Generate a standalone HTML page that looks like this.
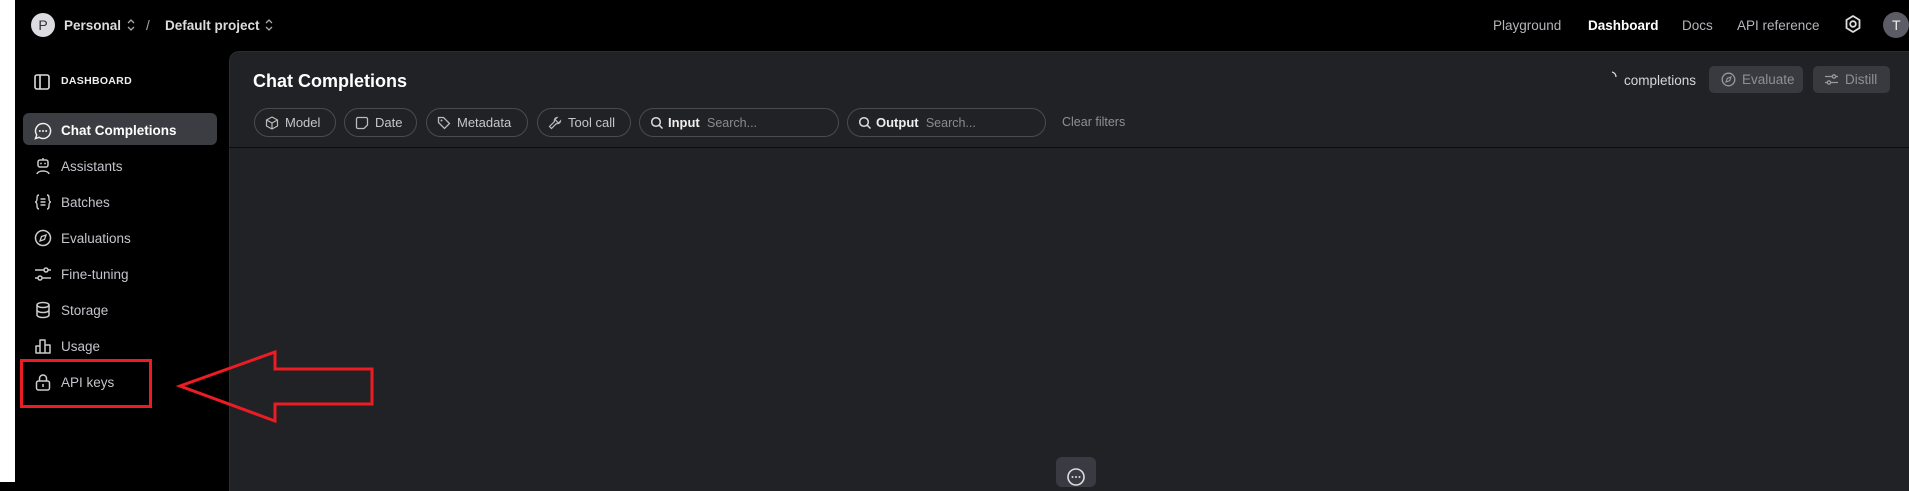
<!DOCTYPE html>
<html><head><meta charset="utf-8"><style>
*{box-sizing:border-box;margin:0;padding:0}
body{width:1909px;height:482px;overflow:hidden;background:#000;font-family:"Liberation Sans",sans-serif;position:relative;color:#ececf1}
.abs{position:absolute}
.white{left:0;top:0;width:15px;height:482px;background:#fff}
.t{position:absolute;white-space:nowrap;line-height:1}
.panel{left:229px;top:51px;width:1700px;height:440px;background:#212225;border-radius:10px 0 0 0;border-top:1px solid #2c2d31;border-left:1px solid #2c2d31}
.div{left:229px;top:147px;width:1680px;height:1px;background:#0c0c0d}
.nav{font-size:13.5px;color:#b4b4bb;top:19px}
.item{font-size:13.5px;color:#c5c5cc;left:61px}
.ico{position:absolute;left:34px}
.pill{position:absolute;top:108px;height:29px;border:1px solid #4a4b51;border-radius:15px;color:#c5c6cc;font-size:13px;line-height:27px;padding-left:30px}
.pill svg{position:absolute;left:10px;top:7px}
.btn{position:absolute;top:66px;height:27px;background:#393a40;border-radius:5px;color:#8f9097;font-size:13.5px;line-height:27px}
</style></head><body>
<div class="abs white"></div>
<div class="abs" style="left:31px;top:13px;width:24px;height:24px;border-radius:50%;background:#dcdce0;color:#333;font-size:14px;text-align:center;line-height:24px">P</div>
<div class="t" style="left:64px;top:19px;font-size:13.5px;font-weight:bold;color:#ddd">Personal</div>
<svg class="abs" style="left:126px;top:17px" width="10" height="16" viewBox="0 0 10 16"><path d="M2 6l3-3 3 3M2 10l3 3 3-3" stroke="#aaa" fill="none" stroke-width="1.3"/></svg>
<div class="t" style="left:146px;top:19px;font-size:13.5px;color:#aaa">/</div>
<div class="t" style="left:165px;top:19px;font-size:13.5px;font-weight:bold;color:#ddd">Default project</div>
<svg class="abs" style="left:264px;top:17px" width="10" height="16" viewBox="0 0 10 16"><path d="M2 6l3-3 3 3M2 10l3 3 3-3" stroke="#aaa" fill="none" stroke-width="1.3"/></svg>

<div class="t nav" style="left:1493px">Playground</div>
<div class="t nav" style="left:1588px;color:#fff;font-weight:bold">Dashboard</div>
<div class="t nav" style="left:1682px">Docs</div>
<div class="t nav" style="left:1737px">API reference</div>
<svg class="abs" style="left:1843px;top:14px" width="20" height="20" viewBox="0 0 20 20"><path d="M10 2l6.5 4v8L10 18l-6.5-4V6z" stroke="#ddd" stroke-width="1.8" fill="none" stroke-linejoin="round"/><circle cx="10" cy="10" r="2.8" stroke="#ddd" stroke-width="1.8" fill="none"/></svg>
<div class="abs" style="left:1883px;top:12px;width:26px;height:26px;border-radius:50%;background:#5b5c66;color:#eee;font-size:14px;line-height:26px;padding-left:9px">T</div>

<svg class="ico" style="top:74px" width="16" height="16" viewBox="0 0 16 16"><rect x="1" y="1" width="14" height="14" rx="2" stroke="#ddd" stroke-width="1.6" fill="none"/><path d="M6 1v14" stroke="#ddd" stroke-width="1.6"/></svg>
<div class="t" style="left:61px;top:76px;font-size:10.5px;font-weight:bold;color:#eee;letter-spacing:.3px">DASHBOARD</div>

<div class="abs" style="left:23px;top:113px;width:194px;height:32px;background:#3c3d42;border-radius:6px"></div>
<svg class="ico" style="top:122px" width="18" height="18" viewBox="0 0 18 18"><path d="M9 1.5a7.5 7.5 0 1 1-4 13.8L1.5 16.5l1.2-3.5A7.5 7.5 0 0 1 9 1.5z" stroke="#eee" stroke-width="1.5" fill="none"/><circle cx="5.8" cy="9" r="1" fill="#eee"/><circle cx="9" cy="9" r="1" fill="#eee"/><circle cx="12.2" cy="9" r="1" fill="#eee"/></svg>
<div class="t item" style="top:124px;color:#fff;font-weight:bold">Chat Completions</div>

<svg class="ico" style="top:157px" width="18" height="18" viewBox="0 0 18 18"><rect x="4" y="3" width="10" height="7" rx="2" stroke="#ccc" stroke-width="1.5" fill="none"/><path d="M9 1v2M3 17c1-4 11-4 12 0" stroke="#ccc" stroke-width="1.5" fill="none"/><circle cx="7" cy="6.5" r=".9" fill="#ccc"/><circle cx="11" cy="6.5" r=".9" fill="#ccc"/></svg>
<div class="t item" style="top:160px">Assistants</div>
<svg class="ico" style="top:193px" width="18" height="18" viewBox="0 0 18 18"><path d="M5 2C3 2 3 4 3 6s-1 3-2 3c1 0 2 1 2 3s0 4 2 4M13 2c2 0 2 2 2 4s1 3 2 3c-1 0-2 1-2 3s0 4-2 4M6.5 6h5M6.5 9h5M6.5 12h5" stroke="#ccc" stroke-width="1.4" fill="none"/></svg>
<div class="t item" style="top:196px">Batches</div>
<svg class="ico" style="top:229px" width="18" height="18" viewBox="0 0 18 18"><circle cx="9" cy="9" r="7.5" stroke="#ccc" stroke-width="1.5" fill="none"/><path d="M12 6l-1.5 4.5L6 12l1.5-4.5z" stroke="#ccc" stroke-width="1.3" fill="none"/></svg>
<div class="t item" style="top:232px">Evaluations</div>
<svg class="ico" style="top:265px" width="18" height="18" viewBox="0 0 18 18"><path d="M1 5h9M14 5h3M1 13h3M8 13h9" stroke="#ccc" stroke-width="1.5"/><circle cx="12" cy="5" r="2" stroke="#ccc" stroke-width="1.5" fill="none"/><circle cx="6" cy="13" r="2" stroke="#ccc" stroke-width="1.5" fill="none"/></svg>
<div class="t item" style="top:268px">Fine-tuning</div>
<svg class="ico" style="top:301px" width="18" height="18" viewBox="0 0 18 18"><ellipse cx="9" cy="4" rx="6" ry="2.5" stroke="#ccc" stroke-width="1.5" fill="none"/><path d="M3 4v10c0 1.4 2.7 2.5 6 2.5s6-1.1 6-2.5V4M3 9c0 1.4 2.7 2.5 6 2.5s6-1.1 6-2.5" stroke="#ccc" stroke-width="1.5" fill="none"/></svg>
<div class="t item" style="top:304px">Storage</div>
<svg class="ico" style="top:337px" width="18" height="18" viewBox="0 0 18 18"><path d="M2 16V9h4V3h5v5h5v8zM6 9v7M11 8v8" stroke="#ccc" stroke-width="1.5" fill="none" stroke-linejoin="round"/></svg>
<div class="t item" style="top:340px">Usage</div>
<svg class="ico" style="top:373px" width="18" height="18" viewBox="0 0 18 18"><rect x="2.5" y="8" width="13" height="9" rx="2" stroke="#ccc" stroke-width="1.5" fill="none"/><path d="M5.5 8V5.5a3.5 3.5 0 0 1 7 0V8M9 11v3" stroke="#ccc" stroke-width="1.5" fill="none"/></svg>
<div class="t item" style="top:376px">API keys</div>

<div class="abs panel"></div>
<div class="abs div"></div>
<div class="t" style="left:253px;top:72px;font-size:18px;font-weight:bold;color:#fff">Chat Completions</div>

<div class="pill" style="left:254px;width:82px"><svg width="14" height="14" viewBox="0 0 14 14"><path d="M7 1l5.5 3v6L7 13 1.5 10V4zM1.5 4L7 7l5.5-3M7 7v6" stroke="#bbb" stroke-width="1.2" fill="none"/></svg>Model</div>
<div class="pill" style="left:344px;width:73px"><svg width="14" height="14" viewBox="0 0 14 14"><path d="M3 1.5h8a1.5 1.5 0 0 1 1.5 1.5v6L9 12.5H3A1.5 1.5 0 0 1 1.5 11V3A1.5 1.5 0 0 1 3 1.5z" stroke="#bbb" stroke-width="1.3" fill="none"/></svg>Date</div>
<div class="pill" style="left:426px;width:102px"><svg width="14" height="14" viewBox="0 0 14 14"><path d="M1.5 1.5h5l6 6-5 5-6-6z" stroke="#bbb" stroke-width="1.3" fill="none"/><circle cx="4.5" cy="4.5" r="1" fill="#bbb"/></svg>Metadata</div>
<div class="pill" style="left:537px;width:94px"><svg width="14" height="14" viewBox="0 0 14 14"><path d="M9 1.5a3 3 0 0 0-2.5 4L1.5 10.5l2 2 5-5a3 3 0 0 0 4-2.5L10.5 7 7 3.5z" stroke="#bbb" stroke-width="1.2" fill="none"/></svg>Tool call</div>
<div class="pill" style="left:639px;width:200px;padding-left:28px"><svg width="14" height="14" viewBox="0 0 14 14"><circle cx="6" cy="6" r="4.3" stroke="#ddd" stroke-width="1.5" fill="none"/><path d="M9 9l3.5 3.5" stroke="#ddd" stroke-width="1.5"/></svg><b style="color:#eee">Input</b>&nbsp;&nbsp;<span style="color:#8a8b91;font-size:12.5px">Search...</span></div>
<div class="pill" style="left:847px;width:199px;padding-left:28px"><svg width="14" height="14" viewBox="0 0 14 14"><circle cx="6" cy="6" r="4.3" stroke="#ddd" stroke-width="1.5" fill="none"/><path d="M9 9l3.5 3.5" stroke="#ddd" stroke-width="1.5"/></svg><b style="color:#eee">Output</b>&nbsp;&nbsp;<span style="color:#8a8b91;font-size:12.5px">Search...</span></div>
<div class="t" style="left:1062px;top:116px;font-size:12.5px;color:#8f9097">Clear filters</div>

<svg class="abs" style="left:1610px;top:71px" width="10" height="10" viewBox="0 0 10 10"><path d="M2 1a5 5 0 0 1 4 5" stroke="#ddd" stroke-width="1.3" fill="none"/></svg>
<div class="t" style="left:1624px;top:74px;font-size:13.5px;color:#d6d6dc">completions</div>
<div class="btn" style="left:1709px;width:94px;padding-left:33px"><svg class="abs" style="left:12px;top:6px" width="15" height="15" viewBox="0 0 15 15"><circle cx="7.5" cy="7.5" r="6.3" stroke="#999" stroke-width="1.3" fill="none"/><path d="M10 5l-1.3 3.7L5 10l1.3-3.7z" stroke="#999" stroke-width="1.1" fill="none"/></svg>Evaluate</div>
<div class="btn" style="left:1813px;width:77px;padding-left:32px"><svg class="abs" style="left:11px;top:6px" width="15" height="15" viewBox="0 0 15 15"><path d="M1 4.5h7M12 4.5h2M1 10.5h2M7 10.5h7" stroke="#999" stroke-width="1.3"/><circle cx="10" cy="4.5" r="1.7" stroke="#999" stroke-width="1.3" fill="none"/><circle cx="5" cy="10.5" r="1.7" stroke="#999" stroke-width="1.3" fill="none"/></svg>Distill</div>

<div class="abs" style="left:1056px;top:457px;width:40px;height:30px;background:#393a42;border-radius:6px"></div>
<svg class="abs" style="left:1066px;top:467px" width="20" height="20" viewBox="0 0 20 20"><circle cx="10" cy="10" r="8" stroke="#ddd" stroke-width="1.6" fill="none"/><circle cx="6.5" cy="10" r="1" fill="#ddd"/><circle cx="10" cy="10" r="1" fill="#ddd"/><circle cx="13.5" cy="10" r="1" fill="#ddd"/></svg>

<div class="abs" style="left:20px;top:359px;width:132px;height:49px;border:3px solid #ec1c24"></div>
<svg class="abs" style="left:0;top:0" width="400" height="482"><path d="M180 386L275 352V369H372V404H275V421Z" stroke="#ec1c24" stroke-width="3" fill="none"/></svg>
</body></html>
